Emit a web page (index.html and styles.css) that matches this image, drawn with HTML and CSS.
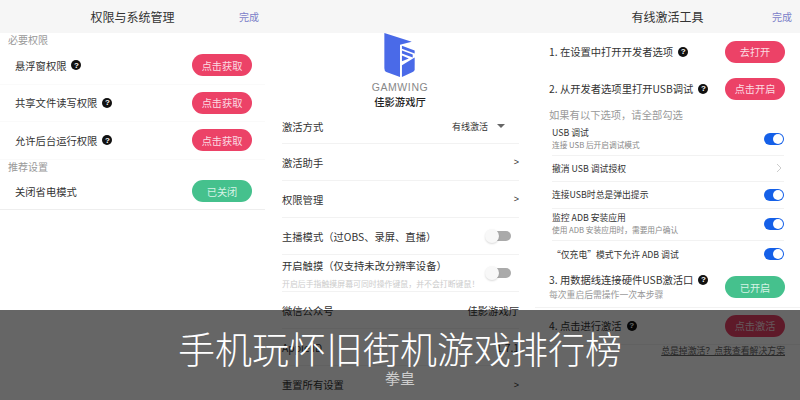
FILE: index.html
```html
<!DOCTYPE html>
<html lang="zh-CN">
<head>
    <meta charset="UTF-8">
    <title>手机玩怀旧街机游戏排行榜</title>
    <link rel="stylesheet" href="styles.css">
</head>
<body>
    <div class="shot">
        <div class="col">
            <div class="topbar"><span class="topbar-title">权限与系统管理</span><span class="topbar-done">完成</span></div>
            <div class="group-label">必要权限</div>
            <div class="perm"><span class="with-help">悬浮窗权限<i class="help">?</i></span><span class="btn btn-red">点击获取</span></div>
            <div class="perm"><span class="with-help">共享文件读写权限<i class="help">?</i></span><span class="btn btn-red">点击获取</span></div>
            <div class="perm"><span class="with-help">允许后台运行权限<i class="help">?</i></span><span class="btn btn-red">点击获取</span></div>
            <div class="group-label">推荐设置</div>
            <div class="perm perm-last"><span>关闭省电模式</span><span class="btn btn-green">已关闭</span></div>
        </div>

        <div class="col">
            <div class="topbar"></div>
            <div class="brand">
                <svg class="brand-logo" width="32" height="45" viewBox="0 0 32 45">
                    <path d="M0 0 L28 9 L16 12 V45 L2 40 Q0 39 0 36 Z" fill="#4a6ae8"/>
                    <path d="M18 13 L31 18 V21 L18 16 Z M18 18 L29 22 V25 L18 21 Z M18 23 L25 26 L18 29 Z" fill="#4a6ae8"/>
                    <path d="M18 33 L31 25 V37 Q31 39 29 40 L18 45 Z" fill="#4a6ae8"/>
                </svg>
                <div class="brand-en">GAMWING</div>
                <div class="brand-cn">佳影游戏厅</div>
            </div>
            <div class="menu">
                <div class="menu-row menu-first"><span>激活方式</span><span class="menu-pick">有线激活<i class="caret"></i></span></div>
                <div class="menu-row"><span>激活助手</span><span class="arrow">&gt;</span></div>
                <div class="menu-row"><span>权限管理</span><span class="arrow">&gt;</span></div>
                <div class="menu-row"><span>主播模式（过OBS、录屏、直播）</span><span class="switch-off"></span></div>
                <div class="menu-row">
                    <div>
                        <div class="menu-main">开启触摸（仅支持未改分辨率设备）</div>
                        <div class="menu-note">开启后手指触摸屏幕可同时操作键鼠，并不会打断键鼠！</div>
                    </div>
                    <span class="switch-off"></span>
                </div>
                <div class="menu-row"><span>微信公众号</span><span>佳影游戏厅</span></div>
                <div class="menu-row"><span>Apple ID</span><span>1.7.1</span></div>
                <div class="menu-row menu-noline"><span>重置所有设置</span><span class="arrow">&gt;</span></div>
            </div>
        </div>

        <div class="col">
            <div class="topbar"><span class="topbar-title">有线激活工具</span><span class="topbar-done topbar-done-right">完成</span></div>
            <div class="step"><span class="with-help">1. 在设置中打开开发者选项<i class="help">?</i></span><span class="btn btn-red">去打开</span></div>
            <div class="step"><span class="with-help">2. 从开发者选项里打开USB调试<i class="help">?</i></span><span class="btn btn-red">点击开启</span></div>
            <div class="hint">如果有以下选项，请全部勾选</div>
            <div class="opts">
                <div class="opt opt-tall"><div><div>USB 调试</div><div class="opt-note">连接 USB 后开启调试模式</div></div><span class="switch-on"></span></div>
                <div class="opt"><span>撤消 USB 调试授权</span><svg class="chev" width="6" height="10" viewBox="0 0 6 10"><path d="M1 1 L5 5 L1 9" fill="none" stroke="#ccc"/></svg></div>
                <div class="opt"><span>连接USB时总是弹出提示</span><span class="switch-on"></span></div>
                <div class="opt opt-tall"><div><div>监控 ADB 安装应用</div><div class="opt-note">使用 ADB 安装应用时，需要用户确认</div></div><span class="switch-on"></span></div>
                <div class="opt opt-last"><span>“仅充电”模式下允许 ADB 调试</span><span class="switch-on"></span></div>
            </div>
            <div class="step step-3">
                <div>
                    <div class="with-help">3. 用数据线连接硬件USB激活口<i class="help">?</i></div>
                    <div class="step-note">每次重启后需操作一次本步骤</div>
                </div>
                <span class="btn btn-green">已开启</span>
            </div>
            <div class="step step-4"><span class="with-help">4. 点击进行激活<i class="help">?</i></span><span class="btn btn-red">点击激活</span></div>
            <div class="trouble">总是掉激活？点我查看解决方案</div>
        </div>
    </div>

    <div class="banner">
        <div class="banner-title">手机玩怀旧街机游戏排行榜</div>
        <div class="banner-sub">拳皇</div>
    </div>
</body>
</html>
```

FILE: styles.css
```css
body {
    margin: 0;
    width: 800px;
    height: 400px;
    overflow: hidden;
    position: relative;
    background-color: #fff;
    color: #333;
    font-family: "Noto Sans CJK SC", "Liberation Sans", sans-serif;
    font-size: 10.3px;
}
i {
    font-style: normal;
}
.shot {
    display: grid;
    grid-template-columns: 265px 270px 265px;
}
.col {
    height: 400px;
    overflow: hidden;
}
.topbar {
    height: 33px;
    background-color: #f6f6f6;
    display: flex;
    align-items: center;
    justify-content: center;
    position: relative;
    font-size: 12px;
}
.topbar-title {
    color: #333;
}
.topbar-done {
    position: absolute;
    right: 6px;
    color: #7c80c8;
    font-size: 10px;
}
.topbar-done-right {
    right: 8px;
}
.with-help {
    display: flex;
    align-items: center;
}
.help {
    display: flex;
    align-items: center;
    justify-content: center;
    width: 10px;
    height: 10px;
    margin-left: 5px;
    border-radius: 50%;
    background-color: #111;
    color: #fff;
    font: bold 8px "Liberation Sans", sans-serif;
}
.btn {
    width: 60px;
    height: 22px;
    border-radius: 11px;
    display: flex;
    align-items: center;
    justify-content: center;
    color: #fbdbe2;
    font-size: 10.2px;
    flex-shrink: 0;
}
.btn-red {
    background-color: #ec4267;
}
.btn-green {
    background-color: #45c18d;
    color: #d6f3e6;
}

/* left panel */
.group-label {
    margin-left: 8px;
    height: 14px;
    line-height: 14px;
    color: #999;
    font-size: 10px;
}
.perm {
    display: flex;
    align-items: center;
    justify-content: space-between;
    height: 37.5px;
    padding: 0 13px 0 15px;
    border-bottom: 1px solid #fafafa;
    box-sizing: border-box;
}
.perm-last {
    height: 36px;
    border-bottom: 1px solid #eee;
}

/* middle panel */
.brand {
    display: flex;
    flex-direction: column;
    align-items: center;
    height: 76px;
}
.brand-logo {
    display: block;
    margin-left: -1px;
}
.brand-en {
    margin-top: 2px;
    height: 16px;
    color: #888;
    font: 10.5px/16px "Liberation Sans", sans-serif;
    letter-spacing: 0.6px;
}
.brand-cn {
    height: 14px;
    line-height: 14px;
    color: #222;
    font-size: 10.3px;
    font-weight: 500;
}
.menu {
    padding: 0 16px 0 17px;
}
.menu-row {
    height: 37px;
    box-sizing: border-box;
    display: flex;
    align-items: center;
    justify-content: space-between;
    border-bottom: 1px solid #f2f2f2;
}
.menu-first {
    height: 35px;
}
.menu-main {
    line-height: 17px;
}
.menu-noline {
    border-bottom: none;
}
.menu-pick {
    display: flex;
    align-items: center;
    font-size: 9px;
    margin-right: 14px;
}
.caret {
    margin-left: 9px;
    border-left: 4px solid transparent;
    border-right: 4px solid transparent;
    border-top: 4px solid #666;
}
.arrow {
    font: 9px "Liberation Sans", sans-serif;
}
.menu-note {
    margin-top: 3px;
    color: #ccc;
    font-size: 7.9px;
    line-height: 13px;
    white-space: nowrap;
}
.switch-off {
    width: 24px;
    height: 10px;
    margin-right: 8px;
    border-radius: 5px;
    background-color: #aaa;
    position: relative;
}
.switch-off::before {
    content: "";
    position: absolute;
    left: -2px;
    top: -2px;
    width: 14px;
    height: 14px;
    border-radius: 50%;
    background-color: #f8f8f8;
    box-shadow: 0 1px 2px rgba(0, 0, 0, 0.15);
}

/* right panel */
.step {
    display: flex;
    align-items: center;
    justify-content: space-between;
    height: 37px;
    padding: 0 15px 0 14px;
    white-space: nowrap;
}
.hint {
    height: 16px;
    line-height: 16px;
    margin-left: 14px;
    color: #999;
}
.opts {
    padding: 0 16px 0 17px;
}
.opt {
    display: flex;
    align-items: center;
    justify-content: space-between;
    height: 26.5px;
    box-sizing: border-box;
    font-size: 8.8px;
    border-bottom: 1px solid #f2f2f2;
}
.opt-tall {
    height: 32.5px;
    line-height: 12px;
}
.opt-note {
    color: #888;
    font-size: 7.7px;
}
.opt-last {
    border-bottom: none;
}
.switch-on {
    width: 20px;
    height: 12px;
    border-radius: 6px;
    background-color: #1560e8;
    position: relative;
}
.switch-on::after {
    content: "";
    position: absolute;
    right: 1px;
    top: 1px;
    width: 10px;
    height: 10px;
    border-radius: 50%;
    background-color: #fff;
}
.chev {
    margin-right: 2px;
}
.step-3 {
    height: 39px;
    line-height: 15px;
    border-bottom: 1px solid #f2f2f2;
}
.step-note {
    color: #999;
    font-size: 8.8px;
}
.step-4 {
    height: 37px;
    box-sizing: border-box;
    border-bottom: 1px solid #f2f2f2;
}
.trouble {
    text-align: right;
    padding-right: 15px;
    color: #666;
    font-size: 8.85px;
    line-height: 12px;
    text-decoration: underline;
}

/* caption across the bottom */
.banner {
    position: absolute;
    left: 0;
    right: 0;
    top: 310px;
    height: 90px;
    background-color: rgba(0, 0, 0, 0.6);
    color: #fff;
    text-align: center;
}
.banner-title {
    font-size: 37px;
    line-height: 48px;
    margin-top: 14px;
    font-weight: 300;
}
.banner-sub {
    font-size: 15px;
    line-height: 20px;
    margin-top: -4px;
    color: #ccc;
}
```
